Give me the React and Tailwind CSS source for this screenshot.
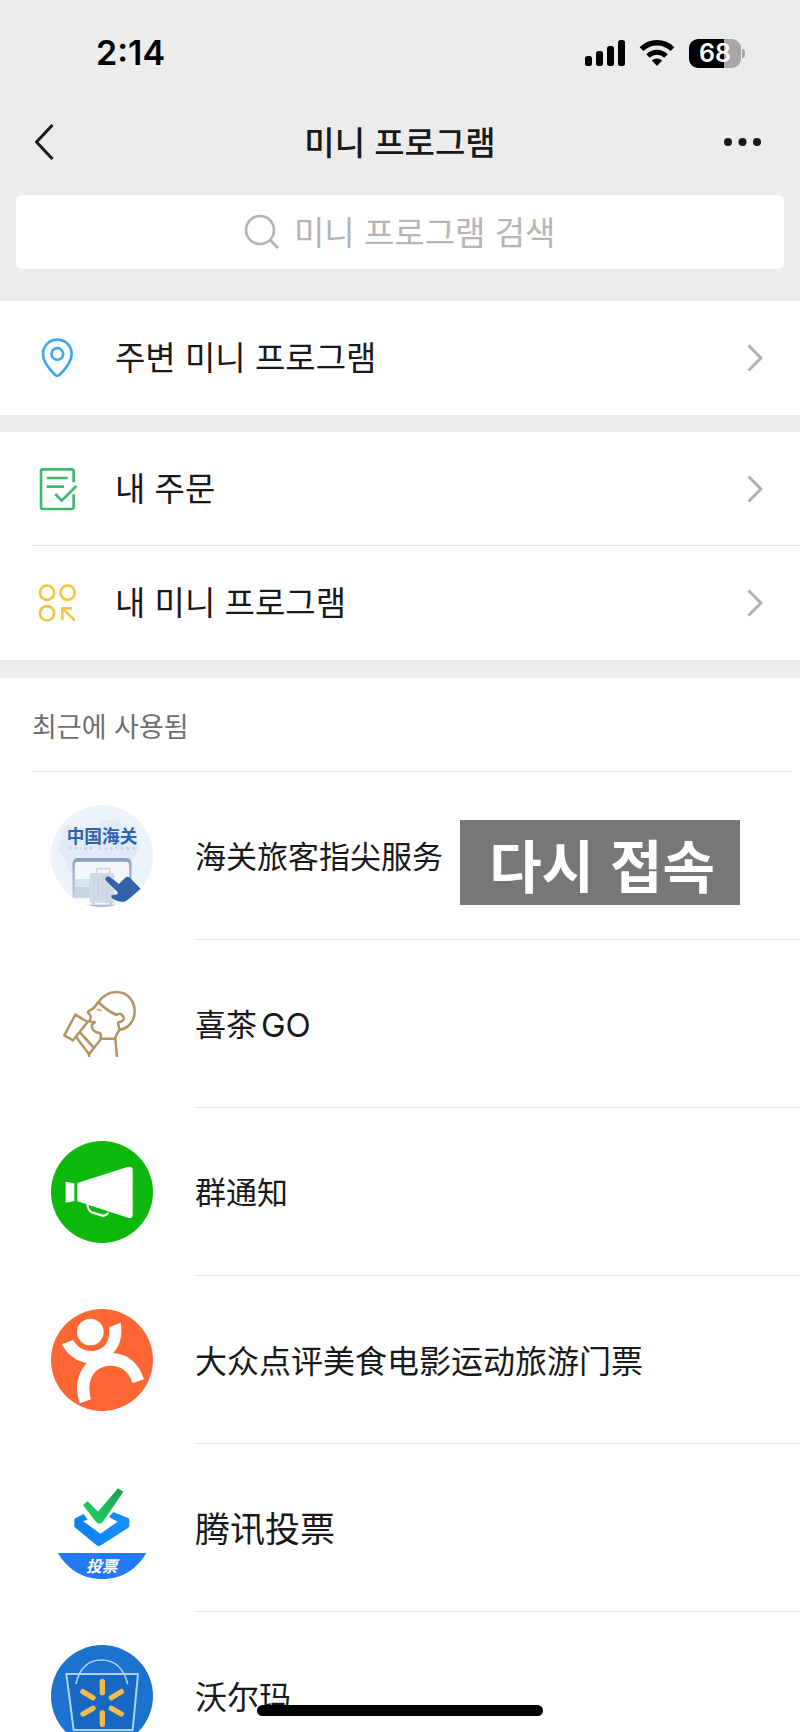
import React from "react";

function SignalIcon() {
  return (
    <svg viewBox="0 0 40 26" className="h-[26px] w-10" aria-hidden="true">
      <rect x="0" y="16" width="7" height="10" rx="2.5" />
      <rect x="11" y="11" width="7" height="15" rx="2.5" />
      <rect x="22" y="6" width="7" height="20" rx="2.5" />
      <rect x="33" y="0" width="7" height="26" rx="2.5" />
    </svg>
  );
}

function WifiIcon() {
  return (
    <svg viewBox="0 0 36 26" className="h-[26px] w-9" fill="none" stroke="black" aria-hidden="true">
      <path d="M2.5 9.2a22 22 0 0 1 31 0" strokeWidth="5.4" />
      <path d="M9 16a12.6 12.6 0 0 1 18 0" strokeWidth="5" />
      <path d="M18 26l-5.200-5.400a7.400 7.400 0 0 1 10.400 0z" fill="black" stroke="none" />
    </svg>
  );
}

function Battery() {
  return (
    <div className="flex items-center gap-px" role="img" aria-label="68%">
      <div className="flex h-[29px] w-[52px] items-center justify-center rounded-[9px] bg-linear-to-r from-black from-68% to-[#a6a6a6] to-68% text-[25px] leading-none font-semibold text-white">
        68
      </div>
      <div className="h-[9px] w-[3px] rounded-r-full bg-[#a6a6a6]" />
    </div>
  );
}

function Chevron() {
  return (
    <svg viewBox="0 0 16 28" className="h-7 w-4 shrink-0" fill="none" stroke="#b0b0b0" strokeWidth="3" aria-hidden="true">
      <path d="M1.500 1.500 14 14 1.500 26.500" strokeLinejoin="round" />
    </svg>
  );
}

const menuIconClass = "size-[50px] shrink-0";

function PinIcon() {
  return (
    <svg viewBox="97 126 150 150" className={menuIconClass} fill="none" stroke="#3fa9e8" strokeWidth="8" aria-hidden="true">
      <path d="M173 146c-25 0-43 19-43 43 0 23 16 43 36 62 5 5 9 5 14 0 20-19 36-39 36-62 0-24-18-43-43-43z" />
      <circle cx="173" cy="189" r="17.500" />
    </svg>
  );
}

function OrderIcon() {
  return (
    <svg viewBox="97 520 150 150" className={menuIconClass} fill="none" stroke="#3dba6c" strokeWidth="8" aria-hidden="true">
      <path d="M222 575v-33q0-6-6-6h-86q-6 0-6 6v106q0 7 6 7h86q6 0 6-7v-37" />
      <path d="M141 562h63M141 588h52M167 610l19 20 44-44" />
    </svg>
  );
}

function AppsIcon() {
  return (
    <svg viewBox="97 865 150 150" className={menuIconClass} fill="none" stroke="#f3c540" strokeWidth="8" aria-hidden="true">
      <circle cx="142" cy="909" r="21.500" />
      <circle cx="204" cy="909" r="21.500" />
      <circle cx="142" cy="971" r="21.500" />
      <path d="M188 990v-34h29M189 957l37 36" />
    </svg>
  );
}

const avatarClass = "size-[102px] shrink-0";

function CustomsLogo() {
  return (
    <svg viewBox="65 74 306 306" className={avatarClass} aria-hidden="true">
      <defs>
        <clipPath id="customs-clip">
          <circle cx="218" cy="227" r="153" />
        </clipPath>
        <linearGradient id="customs-frame" x1="0" y1="0" x2="0" y2="1">
          <stop offset="0" stopColor="#8da0bf" />
          <stop offset="1" stopColor="#c3cede" />
        </linearGradient>
      </defs>
      <g clipPath="url(#customs-clip)">
        <rect x="65" y="74" width="306" height="306" fill="#ecf3fb" />
        <path d="M100 150l15-22 18 14h70l15-22h50l12 22h28l14 20 6 50-18 25v40H120l-12-40-20-30z" fill="#e1ebf7" />
        <path d="M130 353V250q0-17 17-17h143q16 0 16 17v103z" fill="#f3f8fd" />
        <path d="M135 296h50v56h-50z" fill="#dce6f1" />
        <path d="M135 320h50v32h-50z" fill="#c8d4e4" />
        <path d="M133 352V254q0-16 16-16h138q16 0 16 16v45" fill="none" stroke="url(#customs-frame)" strokeWidth="7" />
        <path d="M130 258v-8q0-17 17-17h143q16 0 16 17v8q-4-14-18-14H148q-14 0-18 14z" fill="#8da0bf" />
        <path d="M65 354h306v30H65z" fill="#f4f9fd" />
        <path d="M170 373h90v12h-90z" fill="#abb9ce" />
        <path d="M202 279v-14h39v14" fill="none" stroke="#cdd7e4" strokeWidth="5" />
        <rect x="181" y="278" width="74" height="90" rx="5" fill="#d2dbe7" />
        <path d="M194 283v80M207 283v80M220 283v80M233 283v80" stroke="#c6d1df" strokeWidth="3" />
        <path d="M192 367v6M244 367v6" stroke="#b3c0d2" strokeWidth="6" />
        <path d="M228 299q-1-12 13-10l28 22 20-20q5-4 11 0l34 34-46 40q-24 0-34-8-10-3-8-12l19-3-1-8z" fill="#3263a8" />
      </g>
      <text x="218" y="188" textAnchor="middle" fontSize="53" fontWeight="700" fill="#2e62ad" className="font-['Noto_Sans_CJK_SC',sans-serif]">
        中国海关
      </text>
      <text x="222" y="209" textAnchor="middle" fontSize="12" letterSpacing="8" fill="#9db0cb" className="font-['Inter',sans-serif]">
        CHINA CUSTOMS
      </text>
    </svg>
  );
}

function HeyteaLogo() {
  return (
    <svg viewBox="65 40 306 306" className={avatarClass} fill="none" stroke="#b3935f" strokeWidth="7.500" strokeLinejoin="round" aria-hidden="true">
      <path d="M207 128c15-22 34-31 54-31 34 0 55 28 55 57 0 30-18 52-46 57" />
      <path d="M207 127c-6 10-12 18-21 23-11 4-12 8-6 13 4 5 5 9 3 15l-3 7 16 3-8 7c-2 12 5 22 20 24 5 1 7 5 6 11v7h43" />
      <path d="M207 127c16 16 34 30 55 39 4-6 14-5 19 3 6 11-2 18-14 19-3 8 4 14 3 23-5 8-12 16-12 27l5 54" />
      <path d="M138 165l37 22-44 55-26-15z" />
      <path d="M141 233l38 51M179 292v-8l36-46M150 216l43 48" />
      <path d="M203 148q7 6 14 3" strokeWidth="4" />
    </svg>
  );
}

function NoticeLogo() {
  return (
    <svg viewBox="65 63 306 306" className={avatarClass} aria-hidden="true">
      <circle cx="218" cy="216" r="153" fill="#0cb90c" />
      <path d="M109 185l26 5v53l-26 5z" fill="white" />
      <path d="M144 189l150-48q16-4 16 9v134q0 13-14 9l-152-49z" fill="white" />
      <path d="M174 252q2 20 14 25l31 10q10 2 18-9" fill="none" stroke="white" strokeWidth="7" />
      <path d="M178 260q4 5 12 8l30 9 10-2-42-15z" fill="#0cb90c" />
    </svg>
  );
}

function DianpingLogo() {
  return (
    <svg viewBox="65 57 306 306" className={avatarClass} aria-hidden="true">
      <circle cx="218" cy="210" r="153" fill="#ff6633" />
      <circle cx="183" cy="126" r="40" fill="white" />
      <path
        d="M98 163l33-13c16 25 35 33 57 33 37-1 57-31 51-71l35-14c6 36 0 66-22 91 44 3 77 31 92 79l-34 11c-14-41-43-55-76-51-42 6-64 44-49 100l-34 12c-15-48-8-88 21-121-32-6-58-24-74-56z"
        fill="white"
      />
    </svg>
  );
}

function VoteLogo() {
  return (
    <svg viewBox="65 54 306 306" className={avatarClass} aria-hidden="true">
      <defs>
        <linearGradient id="vote-check" x1="1" y1="0" x2="0.2" y2="0.8">
          <stop offset="0" stopColor="#19a04c" />
          <stop offset="1" stopColor="#1fcb61" />
        </linearGradient>
        <linearGradient id="vote-box" x1="0" y1="0" x2="1" y2="0">
          <stop offset="0" stopColor="#0d7ff0" />
          <stop offset="1" stopColor="#1590ff" />
        </linearGradient>
      </defs>
      <path
        d="M163 165l-24 12q-4 2-4 6v17q0 4 4 7l62 51q7 6 14 1l81-52q4-3 4-7v-17q0-4-4-6l-44-18-13 15 26 14-52 36-52-38 14-3z"
        fill="url(#vote-box)"
      />
      <path d="M161 138l14-11 31 31 60-70 16 10-58 86q-14 20-28 0z" fill="url(#vote-check)" />
      <path d="M86 282h265c-28 48-72 78-132 78S113 330 86 282z" fill="#2379f6" />
      <text x="217" y="339" textAnchor="middle" fontSize="47" fontWeight="700" fontStyle="italic" fill="white" className="font-['Noto_Sans_CJK_SC',sans-serif]">
        投票
      </text>
    </svg>
  );
}

function WalmartLogo() {
  return (
    <svg viewBox="65 77 306 306" className={avatarClass} aria-hidden="true">
      <circle cx="218" cy="230" r="153" fill="#1b72cf" />
      <path d="M133 332l-22-168h215l-16 168z" fill="#1768c2" stroke="#a9d4f8" strokeWidth="6" strokeLinejoin="round" />
      <path d="M140 194c10-44 34-72 76-72s68 28 79 72" fill="none" stroke="#a9d4f8" strokeWidth="5" />
      <path d="M219 186v34M219 281v34M161 217l30 18M161 284l30-17M276 217l-30 18M276 284l-30-17" stroke="#f3bb4c" strokeWidth="16" strokeLinecap="round" />
    </svg>
  );
}

function MenuRow({ icon, label, divider }) {
  return (
    <li className="pl-8">
      <a href="#" className={divider ? "flex h-[114px] items-center gap-[33px] border-b border-[#e5e5e5] pr-[37px]" : "flex h-[114px] items-center gap-[33px] pr-[37px]"}>
        {icon}
        <span className="flex-1 pb-1 text-[33px] leading-10">{label}</span>
        <Chevron />
      </a>
    </li>
  );
}

const recentApps = [
  { id: "customs", name: "海关旅客指尖服务", logo: <CustomsLogo />, size: "text-[31px]", badge: "다시 접속" },
  {
    id: "heytea",
    name: (
      <span className="flex items-center gap-1">
        喜茶<span className="text-[33px]">GO</span>
      </span>
    ),
    logo: <HeyteaLogo />,
    size: "text-[31px]",
  },
  { id: "notice", name: "群通知", logo: <NoticeLogo />, size: "text-[31px]" },
  { id: "dianping", name: "大众点评美食电影运动旅游门票", logo: <DianpingLogo />, size: "text-[32px]" },
  { id: "vote", name: "腾讯投票", logo: <VoteLogo />, size: "text-[35px]" },
  { id: "walmart", name: "沃尔玛", logo: <WalmartLogo />, size: "text-[32px]" },
];

function AppRow({ app }) {
  return (
    <li>
      <a href="#" className="relative flex items-center gap-[42px] pl-[51px]">
        {app.logo}
        <span
          lang="zh-CN"
          className={"flex h-[168px] flex-1 items-center border-b border-[#e8e8e8] pt-1 font-['Inter','Noto_Sans_CJK_SC',sans-serif] " + app.size}
        >
          {app.name}
        </span>
        {app.badge && (
          <span className="absolute top-12 right-[60px] flex h-[85px] w-[280px] items-center justify-center bg-[#777777] pt-0.5 pl-1 text-[57px] leading-none font-bold text-white">
            {app.badge}
          </span>
        )}
      </a>
    </li>
  );
}

export default function App() {
  return (
    <div lang="ko" className="relative flex h-screen flex-col overflow-hidden bg-[#ececec] font-['Noto_Sans_CJK_KR',sans-serif] text-[#191919]">
      <div className="flex h-[106px] shrink-0 items-center justify-between pr-[55px] pl-24 font-['Inter',sans-serif] text-black">
        <time className="text-[34px] leading-none font-semibold">2:14</time>
        <div className="flex items-center gap-[14px]">
          <SignalIcon />
          <WifiIcon />
          <Battery />
        </div>
      </div>

      <header className="grid h-[71px] shrink-0 grid-cols-[80px_1fr_80px] items-center">
        <button type="button" aria-label="뒤로" className="pl-[34px]">
          <svg viewBox="0 0 20 36" className="h-9 w-5" fill="none" stroke="#191919" strokeWidth="3" aria-hidden="true">
            <path d="M18.500 1 2.500 18l16 17" strokeLinejoin="round" />
          </svg>
        </button>
        <h1 className="pb-0.5 text-center text-[33px] leading-10 font-medium">미니 프로그램</h1>
        <button type="button" aria-label="더보기" className="flex justify-end pr-[38px]">
          <svg viewBox="0 0 38 10" className="h-[10px] w-[38px]" fill="#191919" aria-hidden="true">
            <circle cx="4" cy="5" r="4" />
            <circle cx="18.500" cy="5" r="4" />
            <circle cx="33" cy="5" r="4" />
          </svg>
        </button>
      </header>

      <label className="mx-4 mt-[18px] mb-8 flex h-[74px] shrink-0 items-center justify-center gap-[14px] rounded-md bg-white">
        <svg viewBox="0 0 36 36" className="size-9" fill="none" stroke="#b2b2b2" strokeWidth="2.600" aria-hidden="true">
          <circle cx="16" cy="16" r="14" />
          <path d="M26 26l8 8" />
        </svg>
        <input
          type="text"
          aria-label="미니 프로그램 검색"
          placeholder="미니 프로그램 검색"
          className="w-[262px] bg-transparent pb-0.5 text-[33px] leading-10 outline-none placeholder:text-[#b5b5b5]"
        />
      </label>

      <main className="min-h-0 flex-1 overflow-y-auto [scrollbar-width:none]">
        <ul className="bg-white">
          <MenuRow icon={<PinIcon />} label="주변 미니 프로그램" />
        </ul>
        <ul className="mt-[17px] bg-white">
          <MenuRow icon={<OrderIcon />} label="내 주문" divider />
          <MenuRow icon={<AppsIcon />} label="내 미니 프로그램" />
        </ul>
        <section className="mt-[18px] bg-white">
          <h2 className="mr-2 ml-8 flex h-[94px] items-center border-b border-[#e5e5e5] pt-1 text-[27px] text-[#6f6f6f]">최근에 사용됨</h2>
          <ul>
            {recentApps.map((app) => (
              <AppRow key={app.id} app={app} />
            ))}
          </ul>
        </section>
      </main>

      <div className="absolute bottom-4 left-1/2 h-[11px] w-[286px] -translate-x-1/2 rounded-full bg-black" />
    </div>
  );
}
